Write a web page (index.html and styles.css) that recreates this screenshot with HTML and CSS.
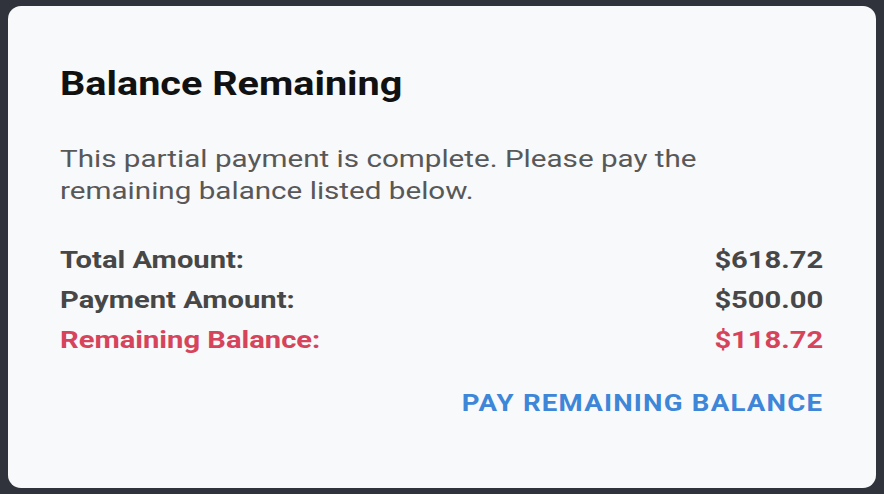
FILE: index.html
```html
<!DOCTYPE html>
<html lang="en">
<head>
<meta charset="utf-8">
<title>Balance Remaining</title>
<link rel="stylesheet" href="styles.css">
</head>
<body>
<div class="dialog">
  <div class="content">
    <h1 class="title">Balance Remaining</h1>
    <p class="message">This partial payment is complete. Please pay the remaining balance listed below.</p>
    <div class="rows">
      <div class="row"><span>Total Amount:</span><span>$618.72</span></div>
      <div class="row"><span>Payment Amount:</span><span>$500.00</span></div>
      <div class="row row-due"><span>Remaining Balance:</span><span>$118.72</span></div>
    </div>
    <div class="actions">
      <button class="pay-btn" type="button">PAY REMAINING BALANCE</button>
    </div>
  </div>
</div>
</body>
</html>
```

FILE: styles.css
```css
html, body {
  margin: 0;
  padding: 0;
  height: 100%;
}
body {
  background: #30333b;
  font-family: Roboto, "Liberation Sans", Arial, sans-serif;
  padding: 6px 8px;
  box-sizing: border-box;
}
.dialog {
  background: #f8f9fb;
  border-radius: 13px;
  height: 100%;
  box-sizing: border-box;
  padding: 58px 53px 0 52px;
}
.content {
  width: 636px;
  transform: scaleX(1.2);
  transform-origin: left top;
}
.title {
  margin: 0;
  font-size: 33px;
  line-height: 40px;
  font-weight: 700;
  color: #111111;
}
.message {
  margin: 39px 0 0;
  font-size: 24.7px;
  line-height: 32px;
  color: #585858;
}
.rows {
  margin-top: 33px;
}
.row {
  display: flex;
  justify-content: space-between;
  font-size: 24.3px;
  line-height: 40px;
  font-weight: 700;
  color: #474747;
}
.row-due {
  color: #d6445c;
}
.actions {
  display: flex;
  justify-content: flex-end;
  margin-top: 24px;
}
.pay-btn {
  background: none;
  border: 0;
  padding: 0;
  font-family: inherit;
  font-size: 23px;
  line-height: 40px;
  letter-spacing: 1px;
  font-weight: 700;
  color: #3d86d8;
  cursor: pointer;
}
```
